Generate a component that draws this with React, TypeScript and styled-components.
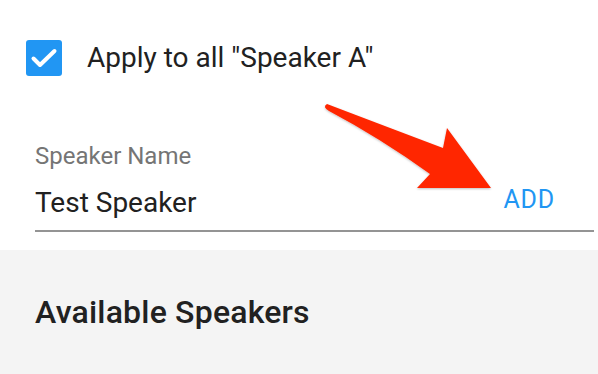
import React from 'react';
import styled, { createGlobalStyle } from 'styled-components';

const GlobalStyle = createGlobalStyle`
  html, body {
    margin: 0;
    padding: 0;
    background: #ffffff;
    font-family: Roboto, "Liberation Sans", sans-serif;
  }
`;

const Page = styled.div`
  position: relative;
  display: flex;
  flex-direction: column;
  min-height: 100vh;
  overflow: hidden;
`;

const TopSection = styled.div`
  display: flex;
  flex-direction: column;
  padding: 40px 4px 18px 26px;
  background: #ffffff;
`;

const CheckRow = styled.label`
  display: flex;
  align-items: center;
  gap: 25px;
  height: 36px;
`;

const CheckBox = styled.span`
  display: flex;
  width: 36px;
  height: 36px;
  border-radius: 3px;
  background: #2196f3;
`;

const CheckLabel = styled.span`
  font-size: 28px;
  line-height: 32px;
  color: #212121;
`;

const Field = styled.div`
  display: flex;
  flex-direction: column;
  margin: 66px 0 0 9px;
`;

const FieldLabel = styled.span`
  font-size: 24px;
  line-height: 28px;
  color: #757575;
`;

const InputRow = styled.div`
  display: flex;
  align-items: flex-start;
  justify-content: space-between;
  margin-top: 17px;
  padding-bottom: 11px;
  border-bottom: 2px solid #949494;
`;

const InputText = styled.span`
  font-size: 28px;
  line-height: 32px;
  color: #212121;
`;

const AddButton = styled.button`
  border: none;
  background: none;
  padding: 0;
  margin: -1px 39px 0 0;
  font-family: inherit;
  font-size: 25px;
  line-height: 28px;
  letter-spacing: 0.8px;
  color: #2196f3;
  cursor: pointer;
`;

const GraySection = styled.div`
  flex: 1;
  background: #f4f4f4;
  padding: 43px 0 0 35px;
`;

const SectionTitle = styled.h2`
  margin: 0;
  font-size: 32px;
  line-height: 38px;
  font-weight: 500;
  letter-spacing: 0.2px;
  color: #212121;
`;

const ArrowOverlay = styled.svg`
  position: absolute;
  left: 0;
  top: 0;
  width: 598px;
  height: 374px;
  pointer-events: none;
`;

const App: React.FC = () => {
  return (
    <Page>
      <GlobalStyle />
      <TopSection>
        <CheckRow>
          <CheckBox>
            <svg width="36" height="36" viewBox="0 0 36 36">
              <path d="M7.5 18.5 L14 25 L28.5 11" fill="none" stroke="#ffffff" strokeWidth="4" strokeLinecap="round" strokeLinejoin="round" />
            </svg>
          </CheckBox>
          <CheckLabel>Apply to all "Speaker A"</CheckLabel>
        </CheckRow>
        <Field>
          <FieldLabel>Speaker Name</FieldLabel>
          <InputRow>
            <InputText>Test Speaker</InputText>
            <AddButton>ADD</AddButton>
          </InputRow>
        </Field>
      </TopSection>
      <GraySection>
        <SectionTitle>Available Speakers</SectionTitle>
      </GraySection>
      <ArrowOverlay viewBox="0 0 598 374">
        <defs>
          <filter id="arrowShadow" x="-10%" y="-10%" width="120%" height="130%">
            <feDropShadow dx="0" dy="1" stdDeviation="1" floodColor="#000000" floodOpacity="0.25" />
          </filter>
        </defs>
        <path
          d="M327 104 Q 390 128 443 148 L447 128 L491 188 L417 188 L430 174 Q 380 138 329 111 Q 322 107 327 104 Z"
          fill="#ff2600"
          filter="url(#arrowShadow)"
        />
      </ArrowOverlay>
    </Page>
  );
};

export default App;
